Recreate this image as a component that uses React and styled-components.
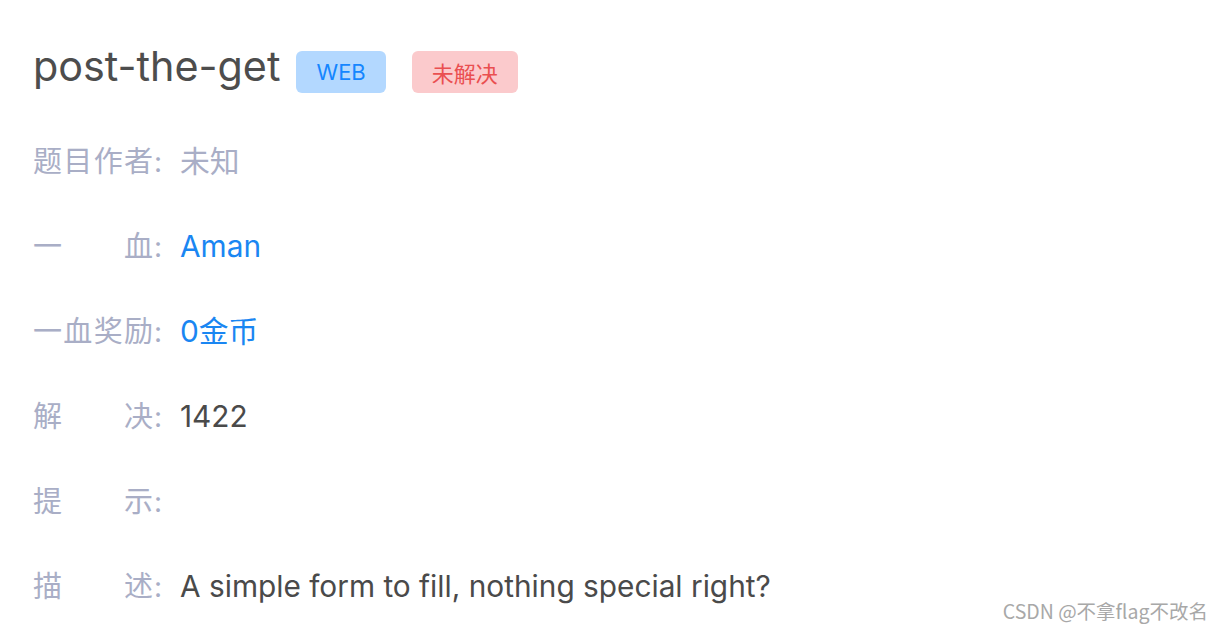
import React from 'react';
import styled, { createGlobalStyle } from 'styled-components';

const GlobalStyle = createGlobalStyle`
  html, body {
    margin: 0;
    padding: 0;
    background: #ffffff;
  }
  body {
    font-family: Inter, "Noto Sans CJK SC", sans-serif;
  }
`;

const rows = [
  { label: '题目作者', value: '未知', tone: 'muted' },
  { label: '一血', value: 'Aman', tone: 'link' },
  { label: '一血奖励', value: '0金币', tone: 'link' },
  { label: '解决', value: '1422', tone: 'plain' },
  { label: '提示', value: '', tone: 'plain' },
  { label: '描述', value: 'A simple form to fill, nothing special right?', tone: 'plain' },
];

const toneColor = {
  muted: '#a9aec6',
  link: '#1a86f2',
  plain: '#4a4a4a',
};

const App = () => {
  return (
    <Page>
      <GlobalStyle />
      <Header>
        <Title>post-the-get</Title>
        <Tag kind="web">WEB</Tag>
        <Tag kind="todo">未解决</Tag>
      </Header>

      <InfoList>
        {rows.map(row => (
          <InfoRow key={row.label}>
            <Label>{row.label}</Label>
            <Colon>:</Colon>
            <Value tone={row.tone}>{row.value}</Value>
          </InfoRow>
        ))}
      </InfoList>

      <Watermark>CSDN @不拿flag不改名</Watermark>
    </Page>
  );
};

export default App;

const Page = styled.div`
  position: relative;
  width: 1220px;
  height: 635px;
  box-sizing: border-box;
  padding: 46px 33px 0;
  overflow: hidden;
`;

const Header = styled.div`
  display: flex;
  align-items: center;
  height: 50px;
`;

const Title = styled.h1`
  margin: 0 16px 10px 0;
  font-family: Inter, sans-serif;
  font-size: 41.3px;
  font-weight: 400;
  color: #4d4d4d;
`;

const Tag = styled.span`
  display: inline-flex;
  align-items: center;
  justify-content: center;
  height: 42px;
  margin-top: 2px;
  padding: 0 20px;
  margin-right: 26px;
  border-radius: 6px;
  font-size: 22px;
  font-family: Inter, "Noto Sans CJK SC", sans-serif;
  background: ${p => (p.kind === 'web' ? '#b3d8ff' : '#fbcacc')};
  color: ${p => (p.kind === 'web' ? '#1586ff' : '#ea4f50')};
`;

const InfoList = styled.div`
  display: flex;
  flex-direction: column;
  gap: 45px;
  margin-top: 43px;
`;

const InfoRow = styled.div`
  display: flex;
  align-items: baseline;
  height: 40px;
  font-size: 29.8px;
  line-height: 40px;
`;

const Label = styled.span`
  width: 120px;
  color: #a9aec6;
  font-family: "Noto Sans CJK SC", sans-serif;
  font-size: 29px;
  text-align: justify;
  text-align-last: justify;
`;

const Colon = styled.span`
  color: #a9aec6;
  width: 26px;
  padding-left: 1px;
  font-size: 28px;
`;

const Value = styled.span`
  color: ${p => toneColor[p.tone]};
  font-family: Inter, "Noto Sans CJK SC", sans-serif;
`;

const Watermark = styled.div`
  position: absolute;
  right: 12px;
  bottom: 10px;
  font-family: "Noto Sans CJK SC", sans-serif;
  font-size: 19.5px;
  color: #a8a8a8;
`;
